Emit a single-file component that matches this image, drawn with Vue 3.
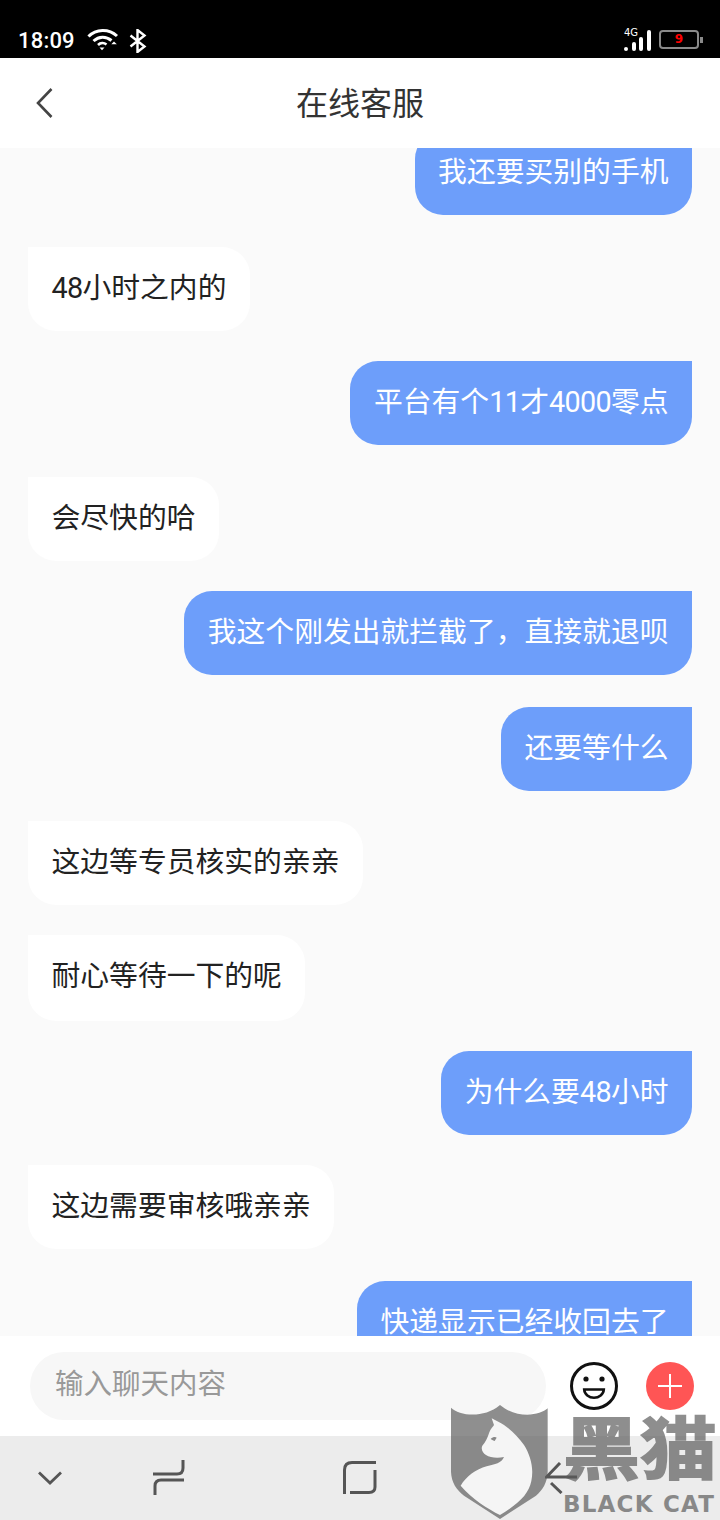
<template>
  <div class="phone">
    <div class="status-bar">
      <span class="time">18:09</span>
      <svg class="wifi" width="32" height="24" viewBox="0 0 32 24">
        <path d="M1.500 9.500C9 1.500 22 1.500 30 9" fill="none" stroke="#fff" stroke-width="3" />
        <path d="M6.500 14C12 9 19 9 24.500 13.500" fill="none" stroke="#fff" stroke-width="3" />
        <path d="M11 18C13.500 15.600 17 15.600 19.500 17.500" fill="none" stroke="#fff" stroke-width="2.600" />
        <path d="M12.500 20.500h5l-2.500 2.800z" fill="#fff" />
        <path d="M27 14.500l2.800 2.800h-5.500z" fill="#fff" />
      </svg>
      <svg class="bt" width="18" height="24" viewBox="0 0 18 24">
        <path d="M1.500 6.500L15.500 17.500L8.500 23V1L15.500 6.500L1.500 17.500" fill="none" stroke="#fff" stroke-width="2.400" />
      </svg>
      <div class="status-right">
        <div class="signal">
          <span class="net">4G</span>
          <div class="bars">
            <i class="b1"></i><i class="b2"></i><i class="b3"></i><i class="b4"></i>
          </div>
        </div>
        <div class="battery"><span>9</span></div>
        <div class="nub"></div>
      </div>
    </div>

    <header class="title-bar">
      <svg class="back" width="20" height="32" viewBox="0 0 20 32">
        <path d="M16.500 2L3 16L16.500 30" fill="none" stroke="#444" stroke-width="2.600" />
      </svg>
      <h1>在线客服</h1>
    </header>

    <div class="messages">
      <div
        v-for="msg in messages"
        :key="msg.id"
        class="row"
        :class="[msg.me ? 'me' : 'them', { loose: msg.loose }]"
      >
        <div class="bubble" :class="{ tall: msg.tall }">
          <span
            v-for="(part, i) in splitDigits(msg.text)"
            :key="i"
            :class="{ num: /\d/.test(part) }"
          >{{ part }}</span>
        </div>
      </div>
    </div>

    <div class="input-bar">
      <div class="input">输入聊天内容</div>
      <svg class="smile" width="50" height="50" viewBox="0 0 50 50">
        <circle cx="25" cy="25" r="22.500" fill="#fff" stroke="#111" stroke-width="3" />
        <circle cx="17" cy="18" r="2.600" fill="#111" />
        <circle cx="33" cy="18" r="2.600" fill="#111" />
        <path d="M15.200 28.500H34.800C34.500 33.500 30 36.800 25 36.800C20 36.800 15.500 33.500 15.200 28.500Z" fill="none" stroke="#111" stroke-width="2.600" />
      </svg>
      <div class="plus"></div>
    </div>

    <nav class="nav-bar">
      <svg class="nav-down" width="24" height="14" viewBox="0 0 24 14">
        <path d="M1 1.500L12 12L23 1.500" fill="none" stroke="#555" stroke-width="2.800" />
      </svg>
      <svg class="nav-recent" width="32" height="36" viewBox="0 0 32 36">
        <path d="M30 0V8Q30 14 24 14H0" fill="none" stroke="#555" stroke-width="3" />
        <path d="M31 20H8Q2 20 2 26V35" fill="none" stroke="#555" stroke-width="3" />
      </svg>
      <svg class="nav-home" width="34" height="34" viewBox="0 0 34 34">
        <path d="M33 1.500H9Q1.500 1.500 1.500 9V33" fill="none" stroke="#555" stroke-width="3" />
        <path d="M32 9V26Q32 31.500 26 31.500H7" fill="none" stroke="#555" stroke-width="3" />
      </svg>
      <svg class="nav-back" width="32" height="32" viewBox="0 0 32 32">
        <path d="M15 1L1.500 15H32" fill="none" stroke="#555" stroke-width="3" />
        <path d="M6 21L16.500 31" fill="none" stroke="#555" stroke-width="3" />
      </svg>
    </nav>

    <!-- watermark sits over the bottom bars -->
    <div class="watermark">
      <svg class="shield" width="130" height="125" viewBox="0 0 390 375">
        <path
          class="shield-body"
          d="M33 38C58 62 130 72 180 30C230 72 300 62 323 40V230C322 262 308 285 288 302L180 372L72 302C50 285 34 262 33 230Z"
        />
        <path
          class="cat"
          d="M155 70L175 80C200 92 232 120 252 150C272 182 282 220 274 258C266 296 240 324 180 360C145 342 95 312 62 272C78 245 108 222 140 214C165 208 185 204 192 186C172 190 150 188 138 180C128 174 122 162 127 152C136 142 142 130 148 112C152 100 160 94 162 90Z"
        />
        <path class="eye" d="M152 132C158 126 166 125 170 128L164 138C158 136 155 134 152 132Z" />
      </svg>
      <div class="brand">
        <div class="brand-cn">黑猫</div>
        <div class="brand-en">BLACK CAT</div>
      </div>
    </div>
  </div>
</template>

<script setup>
import { ref } from 'vue';

const messages = ref([
  { id: 1, me: true, text: '我还要买别的手机' },
  { id: 2, me: false, loose: true, text: '48小时之内的' },
  { id: 3, me: true, text: '平台有个11才4000零点' },
  { id: 4, me: false, loose: true, text: '会尽快的哈' },
  { id: 5, me: true, text: '我这个刚发出就拦截了，直接就退呗' },
  { id: 6, me: true, loose: true, text: '还要等什么' },
  { id: 7, me: false, text: '这边等专员核实的亲亲' },
  { id: 8, me: false, tall: true, text: '耐心等待一下的呢' },
  { id: 9, me: true, text: '为什么要48小时' },
  { id: 10, me: false, text: '这边需要审核哦亲亲' },
  { id: 11, me: true, loose: true, text: '快递显示已经收回去了' }
]);

const splitDigits = (text) => text.split(/(\d+)/).filter(Boolean);
</script>

<style scoped>
.phone {
  position: relative;
  width: 720px;
  height: 1520px;
  display: flex;
  flex-direction: column;
  overflow: hidden;
  background: #fafafa;
  font-family: Roboto, "Noto Sans CJK SC", sans-serif;
}

.status-bar {
  height: 58px;
  flex: none;
  background: #000;
  color: #fff;
  display: flex;
  align-items: flex-end;
  padding: 0 17px 0 18px;
  box-sizing: border-box;
}

.time {
  font-size: 22px;
  font-weight: 500;
  line-height: 26px;
  letter-spacing: 0.2px;
  margin-bottom: 4px;
}

.wifi {
  margin: 0 0 7px 12px;
}

.bt {
  margin: 0 0 5px 10px;
}

.status-right {
  margin-left: auto;
  display: flex;
  align-items: center;
  margin-bottom: 7px;
}

.signal {
  position: relative;
  width: 28px;
  height: 23px;
  margin-right: 7px;
}

.net {
  position: absolute;
  left: 0;
  top: -1px;
  font-family: "DejaVu Sans", sans-serif;
  font-size: 10px;
  line-height: 11px;
}

.bars {
  position: absolute;
  inset: 0;
  display: flex;
  align-items: flex-end;
  gap: 3.600px;
}

.bars i {
  display: block;
  width: 4px;
  border-radius: 2px;
  background: #fff;
}

.b1 { height: 4px; }
.b2 { height: 9px; }
.b3 { height: 14px; }
.b4 { height: 21px; }

.battery {
  width: 40px;
  height: 19px;
  box-sizing: border-box;
  border: 2px solid #8a8a8a;
  border-radius: 4px;
  display: flex;
  align-items: center;
  justify-content: center;
}

.battery span {
  color: #ff0000;
  font-family: "DejaVu Sans", sans-serif;
  font-size: 12px;
  font-weight: 700;
  line-height: 15px;
}

.nub {
  width: 3px;
  height: 6px;
  background: #8a8a8a;
  margin-left: 1px;
}

.title-bar {
  height: 90px;
  flex: none;
  position: relative;
  background: #fff;
  display: flex;
  align-items: center;
  justify-content: center;
}

.title-bar h1 {
  margin: 0 0 4px;
  font-size: 32px;
  font-weight: 400;
  color: #333;
}

.back {
  position: absolute;
  left: 35px;
  top: 29px;
}

.messages {
  flex: 1;
  min-height: 0;
  overflow: hidden;
  padding: 0 28px;
}

.row {
  display: flex;
  margin-top: 30px;
}

.row:first-child {
  margin-top: -17px;
}

.row.loose {
  margin-top: 32px;
}

.row.me {
  justify-content: flex-end;
}

.bubble {
  height: 84px;
  line-height: 82px;
  padding: 0 23.500px;
  font-size: 28.800px;
  white-space: nowrap;
  box-sizing: border-box;
}

.bubble.tall {
  height: 86px;
}

.num {
  letter-spacing: -0.700px;
}

.me .bubble {
  background: #6d9efa;
  color: #fff;
  border-radius: 28px 0 28px 28px;
}

.them .bubble {
  background: #fff;
  color: #222;
  border-radius: 0 28px 28px 28px;
}

.input-bar {
  height: 100px;
  flex: none;
  background: #fff;
  display: flex;
  align-items: center;
  padding: 0 26px 0 30px;
  box-sizing: border-box;
}

.input {
  width: 516px;
  height: 68px;
  line-height: 65px;
  border-radius: 34px;
  background: #f7f7f7;
  color: #999;
  font-size: 28.500px;
  padding-left: 25px;
  box-sizing: border-box;
}

.smile {
  margin-left: 23px;
}

.plus {
  position: relative;
  width: 48px;
  height: 48px;
  margin-left: 27px;
  border-radius: 50%;
  background: #ff5555;
}

.plus::before,
.plus::after {
  content: "";
  position: absolute;
  background: #fff;
}

.plus::before {
  left: 12px;
  right: 12px;
  top: 23px;
  height: 2px;
}

.plus::after {
  top: 12px;
  bottom: 12px;
  left: 23px;
  width: 2px;
}

.nav-bar {
  height: 84px;
  flex: none;
  background: #ececec;
  display: flex;
  align-items: center;
  padding-left: 38px;
}

.nav-recent {
  margin-left: 91px;
}

.nav-home {
  margin-left: 158px;
}

.nav-back {
  margin-left: 168px;
}

.watermark {
  position: absolute;
  left: 440px;
  top: 1395px;
  display: flex;
}

.shield-body {
  fill: rgba(90, 90, 90, 0.68);
}

.cat {
  fill: #f5f5f5;
}

.eye {
  fill: #888;
}

.brand {
  margin-left: -7px;
  width: 157px;
  color: #5a5a5a;
  opacity: 0.68;
}

.brand-cn {
  height: 94px;
  font-family: "Noto Sans CJK SC", sans-serif;
  font-size: 77px;
  font-weight: 700;
  line-height: 92px;
  white-space: nowrap;
  transform: scaleY(0.89);
  transform-origin: 50% 82%;
  -webkit-text-stroke: 2px #5a5a5a;
}

.brand-en {
  font-family: "DejaVu Sans", sans-serif;
  font-size: 23px;
  font-weight: 700;
  line-height: 30px;
  letter-spacing: 1.200px;
  white-space: nowrap;
}
</style>

<style>
html, body {
  margin: 0;
  padding: 0;
}
</style>
